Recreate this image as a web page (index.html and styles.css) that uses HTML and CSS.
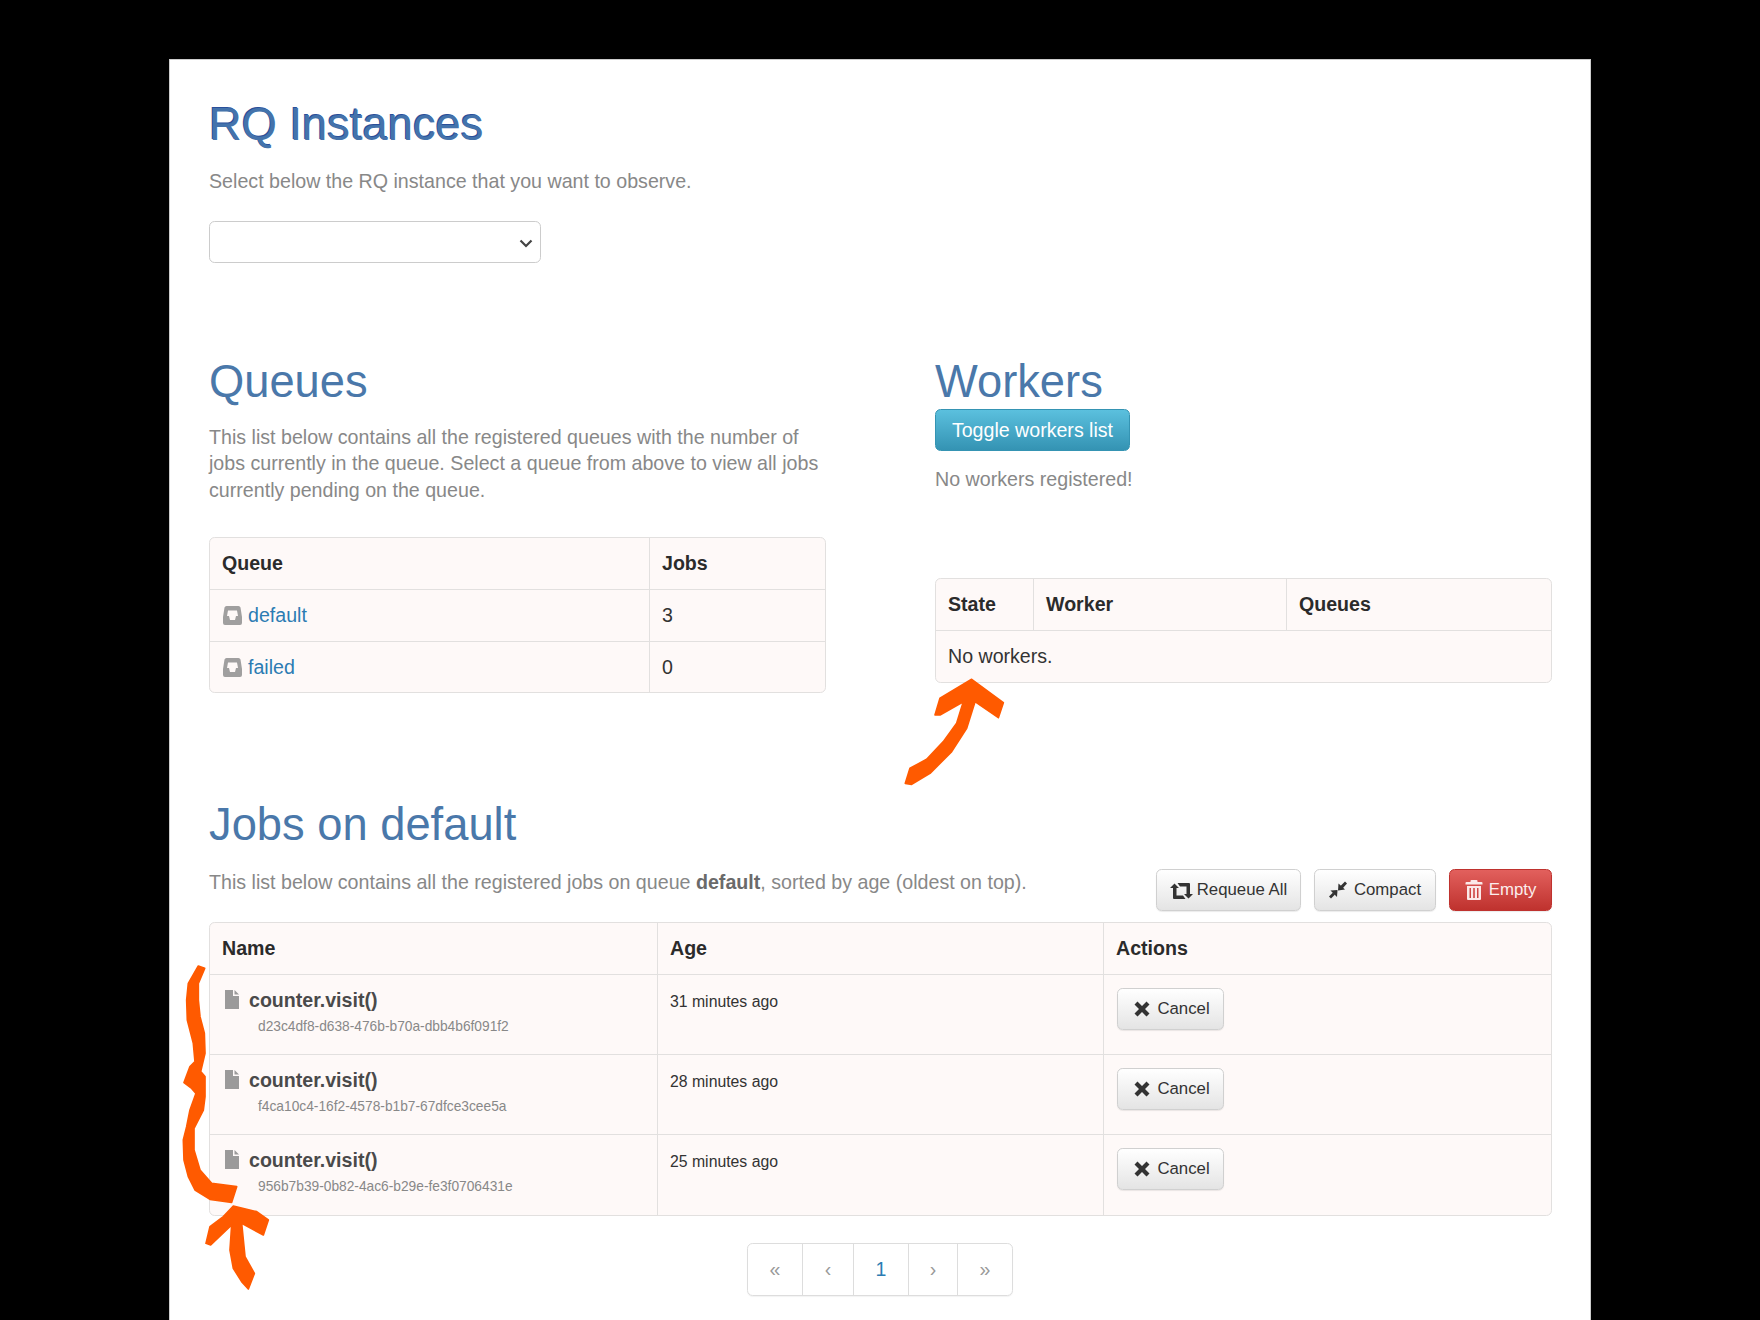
FILE: index.html
```html
<!DOCTYPE html>
<html lang="en">
<head>
<meta charset="utf-8">
<title>RQ Dashboard</title>
<link rel="stylesheet" href="styles.css">
</head>
<body>
<svg width="0" height="0" class="defs" aria-hidden="true">
  <symbol id="i-inbox" viewBox="0 0 19 19"><path fill-rule="evenodd" d="M3.500 0h12Q17 0 17.500 1.500L19 11v6q0 2-2 2H2q-2 0-2-2v-6L1.500 1.500Q2 0 3.500 0zM5 4.500L4 10H6L7 14H12L13 10H15L14 4.500z"/></symbol>
  <symbol id="i-file" viewBox="0 0 14 19"><path d="M0 0h8v6h6v13H0z"/><path d="M9.500 0L14 4.500H9.500z"/></symbol>
  <symbol id="i-retweet" viewBox="0 0 23 16"><path d="M0 5L4.500 .5 9 5H6.500v7.500H13l2.500 3.500H4q-1 0-1-1V5z"/><path d="M23 11l-4.500 4.500L14 11h2.500V3.500H10L7.500 0H19q1 0 1 1v10z"/></symbol>
  <symbol id="i-resize" viewBox="0 0 18 18"><path d="M9 9.500L9.500 2.500l6.500 6z"/><path d="M11.500 5L16 .5 18 2.500 13.500 7.500z"/><path d="M8.500 9L1.500 9.500 8 16z"/><path d="M4 11.500L0 15.500 2 17.500 6 13.500z"/></symbol>
  <symbol id="i-trash" viewBox="0 0 18 20"><path d="M6.500 0h5q1 0 1 1v1h4q1 0 1 1v1.500H.500V3q0-1 1-1h4V1q0-1 1-1z"/><path fill-rule="evenodd" d="M2 6h14v13q0 1-1 1H3q-1 0-1-1zM4.500 8v10H6V8zM8.200 8v10h1.600V8zM12 8v10h1.500V8z"/></symbol>
  <symbol id="i-x" viewBox="0 0 16 16"><path d="M3.500 0.500L8 5l4.500-4.500 3 3L11 8l4.500 4.500-3 3L8 11l-4.500 4.500-3-3L5 8 .5 3.500z"/></symbol>
</svg>

<main class="panel">
  <section class="instances">
    <h1 class="title title-first">RQ Instances</h1>
    <p class="muted">Select below the RQ instance that you want to observe.</p>
    <select class="picker" aria-label="RQ instance"><option></option></select>
  </section>

  <section class="columns">
    <div class="col">
      <h1 class="title">Queues</h1>
      <p class="muted queues-copy">This list below contains all the registered queues with the number of jobs currently in the queue. Select a queue from above to view all jobs currently pending on the queue.</p>
      <div class="tbl-wrap">
        <table class="tbl">
          <colgroup><col class="c-queue"><col></colgroup>
          <thead><tr><th>Queue</th><th>Jobs</th></tr></thead>
          <tbody>
            <tr><td><svg class="ico ico-inbox"><use href="#i-inbox"/></svg><a href="#">default</a></td><td>3</td></tr>
            <tr><td><svg class="ico ico-inbox"><use href="#i-inbox"/></svg><a href="#">failed</a></td><td>0</td></tr>
          </tbody>
        </table>
      </div>
    </div>
    <div class="col">
      <h1 class="title">Workers</h1>
      <button class="btn btn-info">Toggle workers list</button>
      <p class="muted no-workers">No workers registered!</p>
      <div class="tbl-wrap workers-wrap">
        <table class="tbl">
          <colgroup><col class="c-state"><col class="c-worker"><col></colgroup>
          <thead><tr><th>State</th><th>Worker</th><th>Queues</th></tr></thead>
          <tbody><tr><td colspan="3">No workers.</td></tr></tbody>
        </table>
      </div>
    </div>
  </section>

  <section class="jobs">
    <h1 class="title">Jobs on default</h1>
    <div class="jobs-head">
      <p class="muted">This list below contains all the registered jobs on queue <strong>default</strong>, sorted by age (oldest on top).</p>
      <div class="actions">
        <button class="btn btn-sm"><svg class="ico ico-retweet"><use href="#i-retweet"/></svg>Requeue All</button>
        <button class="btn btn-sm"><svg class="ico ico-resize"><use href="#i-resize"/></svg>Compact</button>
        <button class="btn btn-sm btn-danger"><svg class="ico ico-trash"><use href="#i-trash"/></svg>Empty</button>
      </div>
    </div>
    <div class="tbl-wrap">
      <table class="tbl tbl-jobs">
        <colgroup><col class="c-name"><col class="c-age"><col></colgroup>
        <thead><tr><th>Name</th><th>Age</th><th>Actions</th></tr></thead>
        <tbody>
          <tr>
            <td><div class="job-name"><svg class="ico ico-file"><use href="#i-file"/></svg>counter.visit()</div><div class="job-id">d23c4df8-d638-476b-b70a-dbb4b6f091f2</div></td>
            <td class="age">31 minutes ago</td>
            <td><button class="btn btn-sm btn-cancel"><svg class="ico ico-x"><use href="#i-x"/></svg>Cancel</button></td>
          </tr>
          <tr>
            <td><div class="job-name"><svg class="ico ico-file"><use href="#i-file"/></svg>counter.visit()</div><div class="job-id">f4ca10c4-16f2-4578-b1b7-67dfce3cee5a</div></td>
            <td class="age">28 minutes ago</td>
            <td><button class="btn btn-sm btn-cancel"><svg class="ico ico-x"><use href="#i-x"/></svg>Cancel</button></td>
          </tr>
          <tr>
            <td><div class="job-name"><svg class="ico ico-file"><use href="#i-file"/></svg>counter.visit()</div><div class="job-id">956b7b39-0b82-4ac6-b29e-fe3f0706431e</div></td>
            <td class="age">25 minutes ago</td>
            <td><button class="btn btn-sm btn-cancel"><svg class="ico ico-x"><use href="#i-x"/></svg>Cancel</button></td>
          </tr>
        </tbody>
      </table>
    </div>
    <nav class="pager">
      <a class="pg pg-1" href="#">«</a><a class="pg pg-2" href="#">‹</a><a class="pg pg-3 current" href="#">1</a><a class="pg pg-4" href="#">›</a><a class="pg pg-5" href="#">»</a>
    </nav>
  </section>
</main>

<svg class="marks" viewBox="0 0 1760 1320" aria-hidden="true">
  <g transform="translate(900 340) scale(.33333)">
    <path d="M16 1330L30 1285 80 1258 130 1205 170 1150 190 1085 120 1125 105 1125 120 1075 215 1018 310 1088 295 1133 225 1085 200 1165 155 1235 90 1300 35 1333z"/>
  </g>
  <g transform="translate(170 950) scale(.33333)">
    <path d="M85 48L104 55 85 100 85 150 90 200 103 250 105 310 92 365 105 380 105 440 100 480 72 535 72 600 90 660 125 700 200 710 185 757 120 748 75 720 55 680 42 630 40 570 50 530 60 480 78 430 65 415 42 398 60 350 75 335 70 280 52 210 50 150 55 100z"/>
    <path d="M235 1017L253 970 225 920 215 820 280 855 295 810 260 785 190 768 160 800 120 830 108 880 122 885 185 825 180 900 190 955 215 995z"/>
  </g>
</svg>
</body>
</html>
```
FILE: styles.css
```css
* { box-sizing: border-box; }
html, body { margin: 0; height: 1320px; overflow: hidden; }
body {
  background: #000;
  font-family: "Liberation Sans", Arial, sans-serif;
  font-size: 19.6px;
  color: #333;
  position: relative;
}
.defs { position: absolute; }
.panel {
  width: 1422px;
  height: 1261px;
  margin: 59px 0 0 169px;
  padding: 40px 38px 0 39px;
  background: #fff;
  border: 1px solid #ccc;
  border-bottom: 0;
}
.title {
  margin: 0;
  font-size: 45.3px;
  line-height: 50px;
  font-weight: 400;
  color: #4a78aa;
}
.title-first {
  color: #4473ab;
  text-shadow: -1px -1px 0 #2a4f9a;
}
.muted { margin: 0; color: #888; font-size: 19.65px; line-height: 26.6px; }
.instances .muted { margin-top: 18px; }
.picker {
  display: block;
  width: 332px;
  height: 42px;
  margin-top: 26px;
  padding: 0 14px;
  border: 1px solid #ccc;
  border-radius: 5.6px;
  appearance: none;
  background: #fff url("data:image/svg+xml,%3Csvg xmlns='http://www.w3.org/2000/svg' width='14' height='9'%3E%3Cpath d='M1.500 1.500L7 7l5.500-5.500' fill='none' stroke='%23444' stroke-width='2.200'/%3E%3C/svg%3E") no-repeat right 7px top 17px;
  font: inherit;
  color: #444;
}

.columns {
  display: grid;
  grid-template-columns: 617px 617px;
  column-gap: 109px;
  margin-top: 94px;
}
.queues-copy { margin-top: 17px; width: 610px; }
.queues-copy + .tbl-wrap { margin-top: 34px; }
.no-workers { margin-top: 15px; }
.workers-wrap { margin-top: 86px; }

.tbl-wrap {
  border: 1px solid #e2e0df;
  border-radius: 5.6px;
  overflow: hidden;
  background: #fef9f8;
}
.tbl { width: 100%; border-collapse: collapse; table-layout: fixed; }
.tbl th, .tbl td {
  padding: 11px 12px 11px 12.5px;
  line-height: 28.67px;
  font-size: 19.6px;
  text-align: left;
  vertical-align: top;
  border-top: 1px solid #e2e0df;
  border-left: 1px solid #e2e0df;
}
.tbl th { color: #2b2b2b; font-weight: 700; border-top: 0; }
.tbl th:first-child, .tbl td:first-child { border-left: 0; padding-left: 12px; }
.tbl a { color: #2c7cb3; text-decoration: none; }
.c-queue { width: 439px; }
.c-state { width: 97px; }
.c-worker { width: 253px; }
.c-name { width: 447px; }
.c-age { width: 446px; }

.ico { display: inline-block; flex: none; fill: currentColor; }
.ico-inbox { width: 19px; height: 19px; margin: 0 6px 0 1px; vertical-align: -3px; color: #a09f9f; }
.ico-file { width: 14px; height: 19px; margin: 0 10px 0 3px; vertical-align: -2px; color: #9b9a9a; }
.ico-retweet { width: 23px; height: 16px; margin-right: 4px; vertical-align: -4px; }
.ico-resize { width: 18px; height: 18px; margin-right: 7px; vertical-align: -4px; }
.ico-trash { width: 18px; height: 20px; margin-right: 6px; vertical-align: -5px; color: #fbe9e8; }
.ico-x { width: 16px; height: 16px; margin-right: 7px; vertical-align: -3px; }

.btn {
  display: inline-block;
  font-family: inherit;
  border-radius: 5.6px;
  border: 1px solid #d0d0d0;
  cursor: pointer;
}
.btn-sm {
  height: 42px;
  padding: 0 14px;
  font-size: 16.8px;
  color: #333;
  background: linear-gradient(#fff, #e4e4e4);
  box-shadow: 0 1px 1px rgba(0,0,0,.08);
}
.btn-info {
  display: block;
  width: 195px;
  height: 42px;
  margin-top: 2px;
  padding: 1px 0 0;
  font-size: 19.6px;
  color: #fff;
  background: linear-gradient(#5bc0de, #3493b3);
  border-color: #3594b3;
}
.btn-danger {
  color: #fbeeed;
  background: linear-gradient(#e2605d, #bf322e);
  border-color: #bf322e;
}

.jobs { margin-top: 107px; }
.jobs-head {
  display: flex;
  justify-content: space-between;
  align-items: flex-start;
  margin-top: 19px;
  height: 53px;
}
.jobs-head strong { color: #6a6a6a; }
.actions { display: flex; gap: 13px; }
.actions .btn:nth-child(1) { width: 145px; padding: 0; }
.actions .btn:nth-child(2) { width: 122px; padding: 0; }
.actions .btn:nth-child(3) { width: 103px; padding: 0; }

.tbl-jobs td { height: 80px; padding-top: 11px; padding-bottom: 0; }
.job-name { font-weight: 700; color: #4a4a4a; line-height: 28px; }
.job-id { margin: 3px 0 0 36px; font-size: 13.75px; line-height: 20px; color: #888; }
.tbl-jobs .age { font-size: 15.8px; padding-top: 13px; }
.tbl-jobs .btn-cancel { width: 107px; padding: 0 0 0 4px; display: block; margin: 2px 0 0 0.5px; }

.pager {
  display: flex;
  width: 266px;
  height: 53px;
  margin: 27px 0 0 538px;
  border: 1px solid #ddd;
  border-radius: 5.6px;
  overflow: hidden;
  box-shadow: 0 1px 1px rgba(0,0,0,.05);
}
.pg {
  display: flex;
  align-items: center;
  justify-content: center;
  border-left: 1px solid #ddd;
  color: #999;
  text-decoration: none;
  font-size: 19.6px;
}
.pg-1 { width: 54px; border-left: 0; }
.pg-2 { width: 51px; }
.pg-3 { width: 55px; }
.pg-4 { width: 49px; }
.pg-5 { width: 55px; }
.current { color: #2c7cb3; }

.marks {
  position: absolute;
  left: 0;
  top: 0;
  width: 1760px;
  height: 1320px;
  fill: #ff5a00;
  stroke: #ff5a00;
  stroke-width: 5;
  stroke-linejoin: round;
  pointer-events: none;
}
```
